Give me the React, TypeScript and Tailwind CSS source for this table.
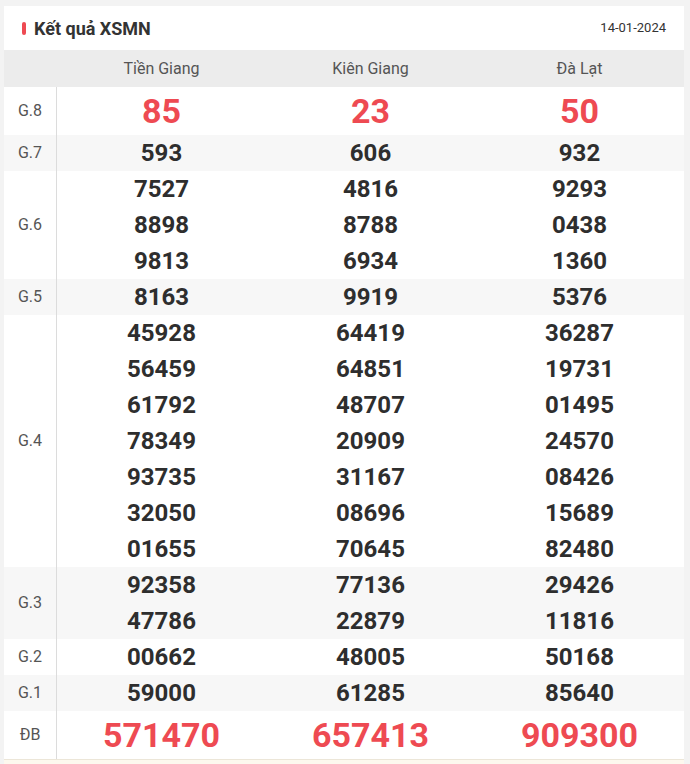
import React from "react";

type Row = { label: string; values: string[][]; big?: boolean };

const rows: Row[] = [
  { label: "G.8", values: [["85"], ["23"], ["50"]], big: true },
  { label: "G.7", values: [["593"], ["606"], ["932"]] },
  { label: "G.6", values: [["7527", "8898", "9813"], ["4816", "8788", "6934"], ["9293", "0438", "1360"]] },
  { label: "G.5", values: [["8163"], ["9919"], ["5376"]] },
  {
    label: "G.4",
    values: [
      ["45928", "56459", "61792", "78349", "93735", "32050", "01655"],
      ["64419", "64851", "48707", "20909", "31167", "08696", "70645"],
      ["36287", "19731", "01495", "24570", "08426", "15689", "82480"],
    ],
  },
  { label: "G.3", values: [["92358", "47786"], ["77136", "22879"], ["29426", "11816"]] },
  { label: "G.2", values: [["00662"], ["48005"], ["50168"]] },
  { label: "G.1", values: [["59000"], ["61285"], ["85640"]] },
  { label: "ĐB", values: [["571470"], ["657413"], ["909300"]], big: true },
];

export default function App() {
  return (
    <div
      className="min-h-[764px] w-[690px] bg-[#f3f3f3] pt-[6px] pl-[4px]"
      style={{ fontFamily: "Roboto, 'Liberation Sans', sans-serif" }}
    >
      <div className="w-[680px] bg-white">
        <div className="flex h-[44px] items-center justify-between pl-[18px] pr-[18px]">
          <div className="flex items-center gap-[8px]">
            <span className="block h-[13px] w-[4px] rounded-full bg-[#ee4a52]" />
            <span className="text-[18px] font-bold text-[#333]">Kết quả XSMN</span>
          </div>
          <span className="text-[13px] text-[#333]">14-01-2024</span>
        </div>
        <div className="grid h-[37px] grid-cols-[53px_1fr_1fr_1fr] items-center bg-[#ececec] text-[16px] text-[#555]">
          <div />
          <div className="text-center">Tiền Giang</div>
          <div className="text-center">Kiên Giang</div>
          <div className="text-center">Đà Lạt</div>
        </div>
        {rows.map((r, i) => (
          <div
            key={r.label}
            className={`grid grid-cols-[53px_1fr_1fr_1fr] ${i % 2 === 1 ? "bg-[#f7f7f7]" : "bg-white"}`}
          >
            <div className="flex items-center justify-center border-r border-[#dcdcdc] text-[16px] text-[#555]">
              {r.label}
            </div>
            {r.values.map((col, j) => (
              <div key={j} className="flex flex-col items-center">
                {col.map((v) =>
                  r.big ? (
                    <div
                      key={v}
                      className="flex h-[48px] items-center text-[34px] font-bold leading-none text-[#ee4a52]"
                    >
                      {v}
                    </div>
                  ) : (
                    <div
                      key={v}
                      className="flex h-[36px] items-center text-[24px] font-bold leading-none text-[#2e2e2e]"
                    >
                      {v}
                    </div>
                  )
                )}
              </div>
            ))}
          </div>
        ))}
        <div className="h-[10px] border-t border-[#ece6d8] bg-[#fdf8ee]" />
      </div>
    </div>
  );
}
